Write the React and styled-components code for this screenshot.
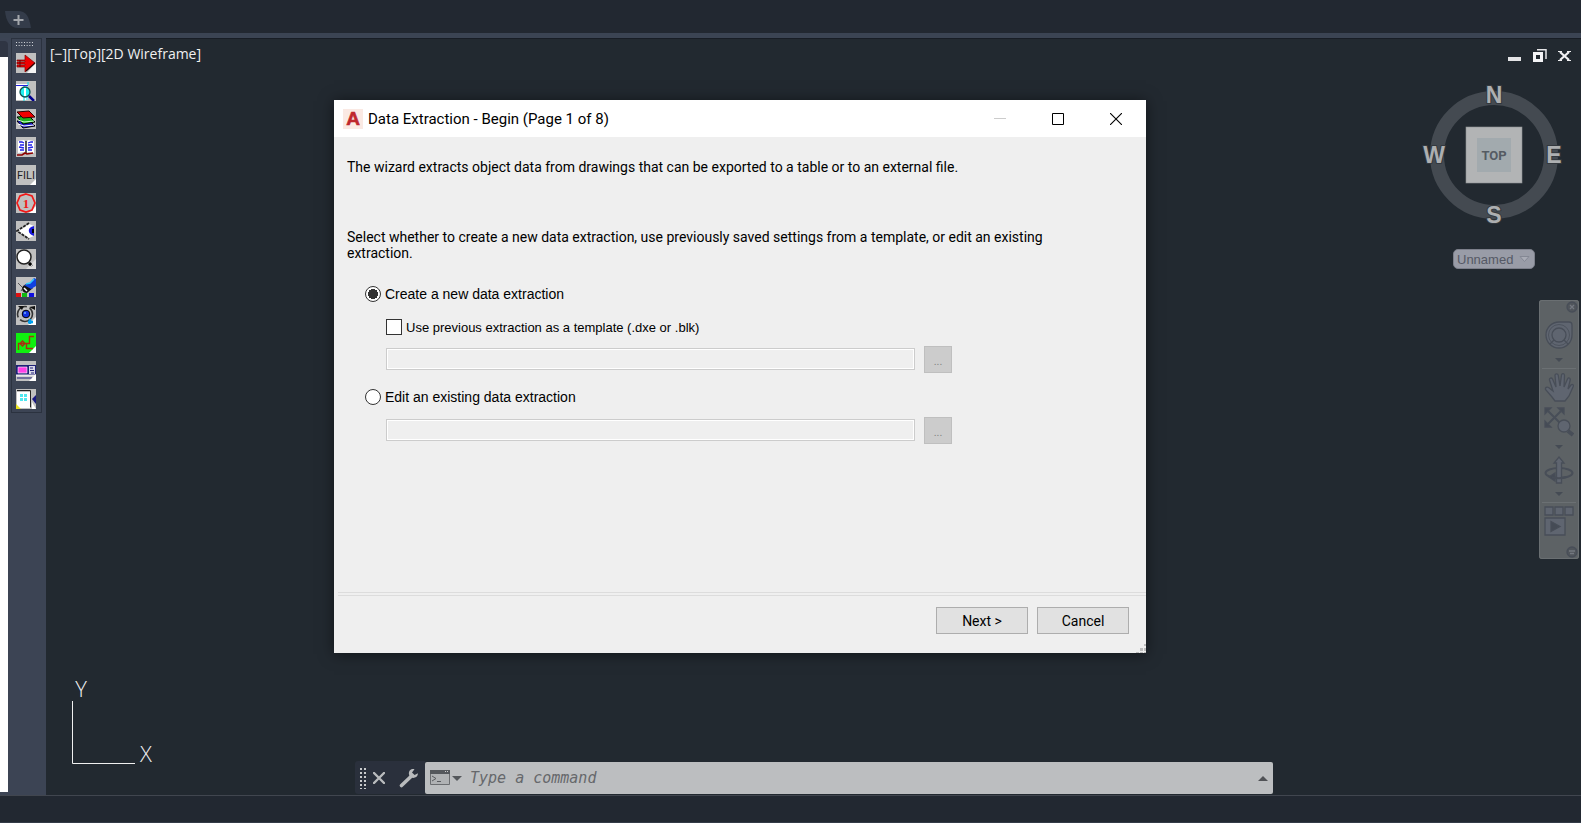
import React, { useState } from 'react'
import styled, { createGlobalStyle } from 'styled-components'

const GlobalStyle = createGlobalStyle`
    * {
        box-sizing: border-box;
    }
    body {
        margin: 0;
        background-color: #222930;
        font-family: Roboto, sans-serif;
    }
    button, input, select {
        font: inherit;
        color: inherit;
        margin: 0;
        padding: 0;
        border: none;
        background: none;
    }
    svg {
        display: block;
    }
`

const TOOLS = [
    {
        label: 'Insert',
        art: (
            <>
                <path d="M20 10v10h-9z" fill="#f4f4f4" />
                <path d="M1 7h8V2l10 8-10 9v-5H1v-2h8v-1H1V9h8V8H1z" fill="#f00000" stroke="#800000" strokeWidth=".7" />
                <path d="M4 7v7" stroke="#600" />
                <path d="M10 18l9-8" stroke="#300" strokeWidth="1.2" />
            </>
        ),
    },
    {
        label: 'Preview',
        art: (
            <>
                <path d="M0 3h12v16H0z" fill="#fff" />
                <path d="M0 4.5h12" stroke="#2020e0" />
                <path d="M12 1v3M8 5v15M11 5v14" stroke="#00e0f0" />
                <circle cx="9" cy="11" r="5" fill="#20f0f0" stroke="#105050" strokeWidth="1.3" />
                <path d="M9 7v8" stroke="#fff" strokeWidth="2" />
                <path d="M13 15l5 5" stroke="#000090" strokeWidth="2.5" />
            </>
        ),
    },
    {
        label: 'Layers',
        art: (
            <>
                <path d="M1 12l12-1 6 6-12 2z" fill="#2020d0" stroke="#000" />
                <path d="M2 15l6 2 10-1" stroke="#fff" fill="none" />
                <path d="M1 8l12-1 6 6-12 2z" fill="#20b020" stroke="#000" />
                <path d="M2 11l6 2 10-1" stroke="#d0ffd0" fill="none" />
                <path d="M1 3l12-1 6 6-12 1z" fill="#f00000" stroke="#300" />
            </>
        ),
    },
    {
        label: 'Dictionary',
        art: (
            <>
                <path d="M2 4l6-1 2 2 2-2 6 1v12l-6-1-2 2-2-2-6 1z" fill="#fff" />
                <path d="M10 4v12" stroke="#222" strokeWidth="1.5" />
                <path d="M3 5h3l2 1M4 8h4M3 10l5 1M4 13h4M12 6l3-1h2M12 8h4M12 11l5-1M12 13h4" stroke="#2020e8" strokeWidth="1.3" fill="none" />
                <path d="M1 18h5l3-2 2 1 6-1" stroke="#900000" strokeWidth="1.6" fill="none" />
            </>
        ),
    },
    {
        label: 'Fill',
        art: (
            <>
                <path d="M20 14v6h-6z" fill="#fff" />
                <text x="10" y="14" textAnchor="middle" fontFamily="Roboto, sans-serif" fontSize="11" fill="#222">FILI</text>
            </>
        ),
    },
    {
        label: 'Balloon',
        art: (
            <>
                <path d="M20 13v7h-7z" fill="#fff" />
                <path d="M10 1l6 2 3 7-3 7-6 2-6-2-3-7 3-7z" fill="none" stroke="#f01818" strokeWidth="1.7" />
                <text x="10" y="15" textAnchor="middle" fontFamily="Liberation Serif, serif" fontWeight="700" fontSize="13" fill="#f01818">1</text>
            </>
        ),
    },
    {
        label: 'View',
        art: (
            <>
                <path d="M1 10l12-7 5 2v10l-5 2z" fill="#fff" />
                <path d="M13 2L1 10l12 8" fill="none" stroke="#222" strokeWidth="1.8" strokeDasharray="3 1" />
                <path d="M18 5c-7 1-7 8 0 10z" fill="#1818d8" />
                <path d="M17 8v4" stroke="#000" strokeWidth="2" />
            </>
        ),
    },
    {
        label: 'Zoom',
        art: (
            <>
                <path d="M20 10v10H10z" fill="#ddd" />
                <circle cx="8" cy="8" r="7" fill="#fff" stroke="#222" strokeWidth="1.5" />
                <path d="M13 14l3 3" stroke="#000" strokeWidth="3" strokeDasharray="3 1" />
            </>
        ),
    },
    {
        label: 'Paint',
        art: (
            <>
                <path d="M2 6l5 5-2 3" stroke="#555" fill="none" />
                <path d="M7 9l5-3 5 5-6 5c-4 0-6-3-4-7z" fill="#111" />
                <path d="M8 8l5-1 5-6 2 1v7l-5 3z" fill="#1040e0" />
                <path d="M10 7l4-1 4-4" stroke="#30c8ff" strokeWidth="1.5" fill="none" />
                <path d="M8 11l3 3" stroke="#fff" strokeWidth="1.5" />
                <path d="M0 16h5v4H0z" fill="#e01010" />
                <path d="M6 16h5v4H6z" fill="#10b810" />
                <path d="M13 16h5v4h-5z" fill="#1010e0" />
            </>
        ),
    },
    {
        label: 'Orbit',
        art: (
            <>
                <path d="M20 12v8h-8z" fill="#fff" />
                <circle cx="9" cy="9" r="7.5" fill="none" stroke="#333" strokeWidth="1.6" strokeDasharray="17 3" />
                <path d="M2 1h6L6 5zM13 2l6-1v4z" fill="#111" />
                <circle cx="10" cy="9" r="3.8" fill="#1030e0" stroke="#000" />
                <circle cx="9" cy="8" r="1" fill="#70b0ff" />
                <path d="M12 17h5M14 14v5" stroke="#00a0f0" strokeWidth="2.5" />
            </>
        ),
    },
    {
        label: 'Route',
        art: (
            <>
                <path d="M0 0h20v20H0z" fill="#10f010" />
                <path d="M20 13v7h-7z" fill="#fff" />
                <path d="M2.5 17v-6.500h11v-7H18M10.500 10.500v5H17M6.500 8l2.500 2.500L6.500 13 4 10.500z" fill="none" stroke="#a83010" strokeWidth="1.4" />
            </>
        ),
    },
    {
        label: 'Title block',
        art: (
            <>
                <path d="M0 4h20v11H0z" fill="#202078" />
                <path d="M2 6h9v6H2z" fill="#ff40e8" stroke="#fff" strokeWidth=".6" />
                <path d="M13 5h6v8h-6z" fill="#d8d8e8" />
                <path d="M14 7h3M14 9.5h4M15 12h3" stroke="#202078" />
                <path d="M0 14.5h20" stroke="#e8e8e8" strokeWidth="2" />
                <path d="M1 17h15" stroke="#202078" />
                <path d="M20 13v7h-7z" fill="#fff" />
            </>
        ),
    },
    {
        label: 'Sheet table',
        art: (
            <>
                <path d="M1 3h14v16H1z" fill="#fff" />
                <path d="M1 1.5h13.500v17" stroke="#222" fill="none" />
                <path d="M4 5h3v7H4zM8 5h3v7H8z" fill="#50e8f0" />
                <path d="M4 8.500h8" stroke="#fff" />
                <path d="M0 15l5 5H0z" fill="#e8e020" />
                <path d="M20 6v9l-4-5z" fill="#181880" />
                <path d="M16 13l4 7h-4z" fill="#fff" />
            </>
        ),
    },
]

const Chevron = () => (
    <svg width="8" height="4" viewBox="0 0 8 4">
        <path d="M0 0h8L4 4z" fill="#454b54" stroke="none" />
    </svg>
)

const CommandIcons = {
    close: (
        <svg width="12" height="12" viewBox="0 0 12 12">
            <path d="M1 1l10 10M11 1L1 11" stroke="#b9bbbd" strokeWidth="2.4" strokeLinecap="round" />
        </svg>
    ),
    wrench: (
        <svg width="20" height="20" viewBox="0 0 20 20">
            <path d="M2.500 17.500L12 8.500" stroke="#b9bbbd" strokeWidth="3.6" strokeLinecap="round" />
            <path d="M15.500 1.200c-3-.8-6 1.200-5.600 4.800.3 3 3.200 4.600 6 3.600 2-.8 3-2.400 3-4.400L15.600 7 13 4.500z" fill="#b9bbbd" />
        </svg>
    ),
}

const ViewCube = () => (
    <svg width="146" height="154" viewBox="0 -7 146 154">
        <circle cx="73" cy="70" r="57" fill="none" stroke="#444a51" strokeWidth="14" />
        <rect x="45" y="42" width="56" height="56" fill="#b2b4b5" stroke="#8e9193" strokeWidth=".6" />
        <rect x="56" y="53" width="34" height="34" fill="#a2aaae" />
        <g textAnchor="middle" fontFamily="Liberation Sans, sans-serif" fontWeight="700">
            <text x="73" y="75" fontFamily="Roboto, sans-serif" fontSize="13" fill="#555b63">TOP</text>
            <g fontSize="23" fill="#adafb1" stroke="#33383e" strokeWidth="2" paintOrder="stroke">
                <text x="73" y="18">N</text>
                <text x="73" y="138">S</text>
                <text x="13" y="78">W</text>
                <text x="133" y="78">E</text>
            </g>
        </g>
    </svg>
)

const NavBar = () => (
    <NavPanel aria-label="Navigation bar">
        <NavButton $height={18} $corner="flex-start" aria-label="Close">
            <svg width="12" height="12" viewBox="0 0 12 12">
                <circle cx="6" cy="6" r="5" fill="#50555b" />
                <path d="M4 4l4 4M8 4L4 8" stroke="#737880" />
            </svg>
        </NavButton>
        <NavButton $height={34} aria-label="Steering wheel">
            <svg width="28" height="28" viewBox="0 0 28 28">
                <path d="M14 1h10q3 0 3 3v10a13 13 0 1 1-13-13z" />
                <circle cx="14" cy="14" r="10.5" fill="none" strokeWidth=".8" />
                <circle cx="14" cy="14" r="7" />
                <path d="M9 19l-4 4M19 19l4 4" />
            </svg>
        </NavButton>
        <NavButton $height={16} aria-label="Wheel options"><Chevron /></NavButton>
        <NavLine />
        <NavButton $height={36} aria-label="Pan">
            <svg width="30" height="30" viewBox="0 0 30 30">
                <path d="M11 29L8 25 1.500 17.500C1 15.500 3 14.500 4.500 15.500L9 19 5.500 8c-.4-2 2-2.800 3-1L12 15 11 3.500c0-2.300 3-2.300 3.300 0L16 14 17.500 3c.4-2 3-1.600 3 .4L20 15l3.500-8c1-2 3-1 2.700 1L24 17l3-4c1.500-1.500 3 0 2 2l-4 9-4 5z" />
            </svg>
        </NavButton>
        <NavButton $height={34} aria-label="Zoom extents">
            <svg width="30" height="30" viewBox="0 0 30 30">
                <path d="M3 3l15 15M18 3L3 18" strokeWidth="2" />
                <path d="M1 1h6L1 7zM20 1v6l-6-6zM1 20v-6l6 6z" fill="#454b55" />
                <path d="M24 24l5 4" strokeWidth="4" />
                <circle cx="20" cy="19" r="6" />
            </svg>
        </NavButton>
        <NavButton $height={16} aria-label="Zoom options"><Chevron /></NavButton>
        <NavButton $height={30} aria-label="Orbit">
            <svg width="30" height="28" viewBox="0 0 30 28">
                <ellipse cx="15" cy="17" rx="13.5" ry="5" fill="none" strokeWidth="2" />
                <path d="M12.500 27V7H10l5-6 5 6h-2.500v20z" />
                <path d="M5 21l6-4v8z" fill="#454b55" />
                <path d="M8 21.300q8 2 14-.3" fill="none" strokeWidth="2" />
            </svg>
        </NavButton>
        <NavButton $height={17} aria-label="Orbit options"><Chevron /></NavButton>
        <NavLine />
        <NavButton $height={36} aria-label="Show motion">
            <svg width="30" height="30" viewBox="0 0 30 30">
                <path d="M1 1h8v8H1zM11 1h8v8h-8zM21 1h8v8h-8zM1 12h20v17H1z" />
                <path d="M7 15.500l9 5-9 5z" fill="#454b55" />
            </svg>
        </NavButton>
        <NavButton $height={20} $corner="flex-end" aria-label="Customize">
            <svg width="12" height="12" viewBox="0 0 12 12">
                <circle cx="6" cy="6" r="5" fill="#50555b" />
                <path d="M3 5h6M4 7.500h4" stroke="#737880" />
            </svg>
        </NavButton>
    </NavPanel>
)

const ExtractionDialog = () => {
    const [mode, setMode] = useState('create')
    const [template, setTemplate] = useState(false)

    return (
        <Dialog role="dialog" aria-labelledby="dialog-title">
            <TitleBar>
                <svg width="20" height="20" viewBox="0 0 20 20">
                    <path d="M0 0h20v20H0z" fill="#fae9e3" />
                    <text x="10" y="16" textAnchor="middle" fontFamily="Liberation Sans, sans-serif" fontWeight="700" fontSize="19" fill="#bf272d" stroke="#bf272d" strokeWidth=".6">A</text>
                </svg>
                <Title id="dialog-title">Data Extraction - Begin (Page 1 of 8)</Title>
                <CaptionButton disabled aria-label="Minimize">
                    <svg width="12" height="12"><path d="M0 5.500h12" stroke="#ccc" /></svg>
                </CaptionButton>
                <CaptionButton aria-label="Maximize">
                    <svg width="12" height="12"><path d="M.5.5h11v11H.5z" fill="none" stroke="#000" /></svg>
                </CaptionButton>
                <CaptionButton aria-label="Close">
                    <svg width="12" height="12"><path d="M0 0l12 12M12 0L0 12" stroke="#000" strokeWidth="1.1" /></svg>
                </CaptionButton>
            </TitleBar>
            <DialogBody>
                <Intro>The wizard extracts object data from drawings that can be exported to a table or to an external file.</Intro>
                <Intro>
                    Select whether to create a new data extraction, use previously saved settings from a template, or edit an existing extraction.
                </Intro>
                <Choices>
                    <Choice>
                        <Radio name="mode" checked={mode === 'create'} onChange={() => setMode('create')} />
                        Create a new data extraction
                    </Choice>
                    <Nested>
                        <Choice $small>
                            <Checkbox checked={template} onChange={() => setTemplate(!template)} />
                            Use previous extraction as a template (.dxe or .blk)
                        </Choice>
                        <FileRow>
                            <PathInput aria-label="Template file" disabled />
                            <BrowseButton disabled aria-label="Browse template">...</BrowseButton>
                        </FileRow>
                    </Nested>
                    <Choice>
                        <Radio name="mode" checked={mode === 'edit'} onChange={() => setMode('edit')} />
                        Edit an existing data extraction
                    </Choice>
                    <Nested>
                        <FileRow>
                            <PathInput aria-label="Existing extraction file" disabled />
                            <BrowseButton disabled aria-label="Browse extraction">...</BrowseButton>
                        </FileRow>
                    </Nested>
                </Choices>
            </DialogBody>
            <Divider />
            <DialogFooter>
                <PushButton>Next &gt;</PushButton>
                <PushButton>Cancel</PushButton>
            </DialogFooter>
            <ResizeGrip width="10" height="10" viewBox="0 0 10 10">
                <path d="M8 1h2v2H8zM4 5h3v3H4zM8 5h2v3H8zM0 9h3v1H0zM4 9h3v1H4zM8 9h2v1H8z" fill="#bdbdbd" />
            </ResizeGrip>
        </Dialog>
    )
}

const App = () => {
    return (
        <Page>
            <GlobalStyle />
            <TabStrip>
                <NewTab aria-label="New drawing">
                    <svg width="32" height="24" viewBox="0 0 32 24">
                        <path d="M5 2h13c8 0 11 5 13 17H18C10 19 6 12 5 2z" fill="#343c4a" />
                        <path d="M18.500 6v10M13.500 11h10" stroke="#a4a7ac" strokeWidth="2" />
                    </svg>
                </NewTab>
            </TabStrip>
            <Workspace>
                <SidePanel />
                <ToolDock>
                    <ToolFrame>
                        <Grip width="17" height="5">
                            <path d="M0 .5h17M0 3.500h17" stroke="#d5d8dc" strokeDasharray="1 1.66" />
                        </Grip>
                        {TOOLS.map((tool) => (
                            <ToolButton key={tool.label} aria-label={tool.label}>
                                <svg width="20" height="20" viewBox="0 0 20 20">{tool.art}</svg>
                            </ToolButton>
                        ))}
                    </ToolFrame>
                </ToolDock>
                <Canvas>
                    <CanvasHeader>
                        <ViewLabel>[−][Top][2D Wireframe]</ViewLabel>
                        <WindowControls>
                            <WindowButton aria-label="Minimize drawing">
                                <svg width="14" height="14"><path d="M0 8h13v4H0z" fill="#e4e4e6" /></svg>
                            </WindowButton>
                            <WindowButton aria-label="Restore drawing">
                                <svg width="14" height="14">
                                    <path d="M4 .8h9V10" fill="none" stroke="#e4e4e6" strokeWidth="1.5" />
                                    <path d="M1.500 4.500h7v7h-7z" fill="none" stroke="#f4f4f6" strokeWidth="3" />
                                </svg>
                            </WindowButton>
                            <WindowButton aria-label="Close drawing">
                                <svg width="14" height="14">
                                    <path d="M2 3l9 8M11 3l-9 8" stroke="#f0f0f2" strokeWidth="2.3" />
                                    <path d="M0 2.500h4M9 2.500h4M0 11.500h4M9 11.500h4" stroke="#f0f0f2" />
                                </svg>
                            </WindowButton>
                        </WindowControls>
                    </CanvasHeader>
                    <ViewTools>
                        <ViewCube />
                        <UcsPicker>
                            <UcsSelect aria-label="Coordinate system">
                                <option>Unnamed</option>
                            </UcsSelect>
                            <UcsArrow width="12" height="7">
                                <path d="M1 .5h9L5.500 5.500z" fill="#a9acb6" stroke="#848894" />
                            </UcsArrow>
                        </UcsPicker>
                    </ViewTools>
                    <NavBar />
                    <UcsIcon width="90" height="102" viewBox="0 -12 90 102">
                        <path d="M2.500 20v62.500H65" fill="none" stroke="#f0f0f0" />
                        <g fontFamily="Open Sans, sans-serif" fontWeight="300" fontSize="22" textAnchor="middle" fill="#f0f0f0">
                            <text x="11" y="16">Y</text>
                            <text x="76" y="81">X</text>
                        </g>
                    </UcsIcon>
                    <ExtractionDialog />
                    <CommandBar>
                        <CommandHandle>
                            <svg width="6" height="22">
                                <path d="M1 1v21M5 1v21" stroke="#c8cacc" strokeWidth="2" strokeDasharray="2 2" />
                            </svg>
                            <button aria-label="Close command line">{CommandIcons.close}</button>
                            <button aria-label="Customize command line">{CommandIcons.wrench}</button>
                        </CommandHandle>
                        <CommandField>
                            <svg width="32" height="16" viewBox="0 0 32 16">
                                <path d="M.5.5h19v14H.5z" fill="#b0b2b4" stroke="#6b6d70" />
                                <path d="M0 0h20v4H0z" fill="#55585c" />
                                <path d="M15 1.500h1M17 1.500h1" stroke="#ccc" />
                                <path d="M2 6l4 2.500L2 11M7 11.500h4" fill="none" stroke="#5a5c60" />
                                <path d="M22 6h10l-5 5z" fill="#55585c" />
                            </svg>
                            <CommandInput aria-label="Command" placeholder="Type a command" />
                            <button aria-label="Command history">
                                <svg width="10" height="5"><path d="M0 5h10L5 0z" fill="#505256" /></svg>
                            </button>
                        </CommandField>
                    </CommandBar>
                </Canvas>
            </Workspace>
            <StatusBar />
        </Page>
    )
}

const Page = styled.div`
    min-height: 100vh;
    display: flex;
    flex-direction: column;
`

const TabStrip = styled.header`
    height: 38px;
    padding-top: 9px;
    background-color: #222831;
    border-bottom: 5px solid #3b4453;
`

const NewTab = styled.button`
    display: block;
`

const Workspace = styled.main`
    flex: 1;
    display: flex;
    background-color: #3c4454;
`

const SidePanel = styled.aside`
    width: 8px;
    margin: 3px 0;
    background-color: #fff;
    border-top: 16px solid #2f3543;
    border-top-right-radius: 4px;
`

const ToolDock = styled.div`
    width: 38px;
    padding-left: 3px;
`

const ToolFrame = styled.div`
    width: 31px;
    padding: 3px 4px;
    border: 1px solid #2b323f;
    display: flex;
    flex-direction: column;
    gap: 8px;
`

const Grip = styled.svg`
    margin-bottom: -2px;
`

const ToolButton = styled.button`
    width: 20px;
    height: 20px;
    background-color: #c0c0c0;
`

const Canvas = styled.section`
    position: relative;
    flex: 1;
    display: flex;
    flex-direction: column;
    background-color: #222930;
    border-top: 1px solid #181d25;
`

const CanvasHeader = styled.div`
    display: flex;
    justify-content: space-between;
    padding: 5px 9px 0 4px;
`

const ViewLabel = styled.span`
    font-family: 'Open Sans', sans-serif;
    font-size: 14px;
    line-height: 20px;
    color: #f0f0f0;
`

const WindowControls = styled.div`
    display: flex;
    gap: 11px;
    padding-top: 5px;
`

const WindowButton = styled.button`
    width: 14px;
    height: 14px;
`

const ViewTools = styled.div`
    align-self: flex-end;
    display: flex;
    flex-direction: column;
    align-items: center;
    gap: 17px;
    margin: 14px 14px 0 0;
`

const UcsPicker = styled.div`
    position: relative;
`

const UcsSelect = styled.select`
    appearance: none;
    display: block;
    width: 82px;
    height: 20px;
    padding-left: 3px;
    border: 1px solid #7c7f8a;
    border-radius: 5px;
    background-color: #999ca7;
    font-family: 'Liberation Sans', sans-serif;
    font-size: 13px;
    color: #555965;
`

const UcsArrow = styled.svg`
    position: absolute;
    top: 7px;
    right: 4px;
    pointer-events: none;
`

const NavPanel = styled.nav`
    align-self: flex-end;
    display: flex;
    flex-direction: column;
    width: 40px;
    margin: 31px 2px 0 0;
    background-color: #5d6265;
    border-radius: 3px;
    box-shadow: inset 0 0 0 1px #6a6f72;
`

const NavButton = styled.button`
    height: ${(props) => props.$height}px;
    display: flex;
    align-items: ${(props) => props.$corner || 'center'};
    justify-content: ${(props) => (props.$corner ? 'flex-end' : 'center')};
    padding: ${(props) => (props.$corner ? '1px' : '0')};
    fill: #5f6570;
    stroke: #484e58;
    stroke-width: 1.3;
`

const NavLine = styled.div`
    height: 1px;
    margin: 0 3px;
    background-color: #6b7073;
`

const UcsIcon = styled.svg`
    position: absolute;
    left: 24px;
    bottom: 24px;
`

const Dialog = styled.div`
    position: absolute;
    top: 61px;
    left: 288px;
    right: 435px;
    background-color: #efefef;
    box-shadow: 0 1px 14px rgba(0, 0, 0, .5);
    color: #000;
    font-size: 14px;
`

const TitleBar = styled.div`
    height: 37px;
    display: flex;
    align-items: center;
    padding: 0 1px 0 9px;
    background-color: #fff;
`

const Title = styled.h1`
    flex: 1;
    margin: 0 0 0 5px;
    font-size: 15px;
    font-weight: 400;
`

const CaptionButton = styled.button`
    width: 58px;
    height: 36px;
    display: flex;
    align-items: center;
    justify-content: center;
`

const DialogBody = styled.div`
    min-height: 455px;
    padding: 22px 13px 0;
`

const Intro = styled.p`
    max-width: 704px;
    margin: 0 0 54px;
    line-height: 16px;

    & + & {
        margin-bottom: 25px;
    }
`

const Choices = styled.div`
    padding-left: 18px;
`

const Choice = styled.label`
    display: flex;
    align-items: center;
    gap: 4px;
    height: 16px;
    font-family: 'Liberation Sans', sans-serif;
    font-size: ${(props) => (props.$small ? '13px' : '14px')};
`

const Radio = styled.input.attrs({ type: 'radio' })`
    appearance: none;
    width: 16px;
    height: 16px;
    border: 1px solid #333;
    border-radius: 50%;
    background-color: #fff;

    &:checked {
        background-image: radial-gradient(circle, #333 5px, transparent 5px);
    }
`

const Checkbox = styled.input.attrs({ type: 'checkbox' })`
    appearance: none;
    width: 16px;
    height: 16px;
    border: 1px solid #333;
    background-color: #fff;

    &:checked {
        box-shadow: inset 0 0 0 3px #fff;
        background-color: #333;
    }
`

const Nested = styled.div`
    padding: 12px 0 16px 21px;

    ${Choice} {
        margin: 5px 0 11px;
    }
`

const FileRow = styled.div`
    display: flex;
    align-items: center;
    gap: 8px;
    max-width: 566px;
`

const PathInput = styled.input`
    flex: 1;
    height: 22px;
    margin: 0 1px 2px 0;
    padding: 0 4px;
    border: 1px solid #ccc;
    box-shadow: inset 0 0 0 1px #fff;
`

const BrowseButton = styled.button`
    width: 28px;
    height: 27px;
    padding-top: 4px;
    border: 1px solid #bfbfbf;
    background-color: #ccc;
    color: #838383;
    font-size: 11px;
`

const Divider = styled.div`
    height: 4px;
    margin-left: 4px;
    border-top: 1px solid #dcdcdc;
    border-bottom: 1px solid #dcdcdc;
`

const DialogFooter = styled.div`
    display: flex;
    justify-content: flex-end;
    gap: 9px;
    padding: 11px 17px 19px;
`

const PushButton = styled.button`
    width: 92px;
    height: 27px;
    border: 1px solid #adadad;
    background-color: #e1e1e1;
`

const ResizeGrip = styled.svg`
    position: absolute;
    right: 0;
    bottom: 0;
`

const CommandBar = styled.div`
    display: flex;
    margin: auto 308px 1px 309px;
`

const CommandHandle = styled.div`
    width: 70px;
    height: 33px;
    display: flex;
    align-items: center;
    padding-left: 5px;
    background-color: #2a303c;
    border-radius: 3px 0 0 3px;

    button:first-of-type {
        margin: 0 14px 0 7px;
    }
`

const CommandField = styled.div`
    flex: 1;
    display: flex;
    align-items: center;
    height: 32px;
    margin-top: 1px;
    padding: 0 5px;
    background-color: #bcbec0;
    border-radius: 2px;
`

const CommandInput = styled.input`
    flex: 1;
    height: 32px;
    padding-left: 8px;
    outline: none;
    font-family: 'DejaVu Sans Mono', monospace;
    font-size: 15px;
    font-style: italic;
    color: #333;

    &::placeholder {
        color: #66686b;
        opacity: 1;
    }
`

const StatusBar = styled.footer`
    height: 28px;
    background-color: #222831;
    border-top: 1px solid #41464f;
    border-bottom: 1px solid #333b47;
`

export default App
